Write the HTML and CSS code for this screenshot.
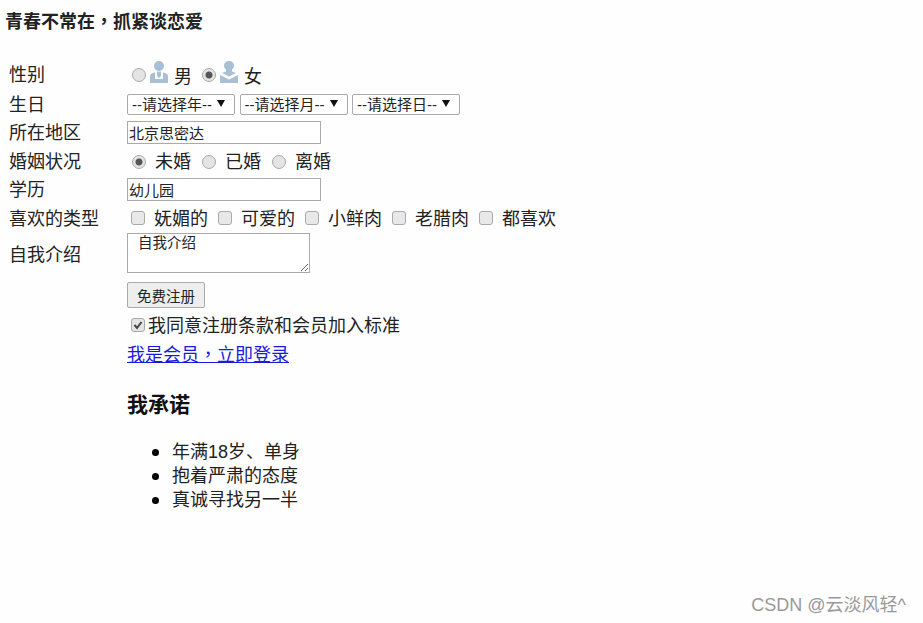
FILE: index.html
```html
<!DOCTYPE html>
<html lang="zh">
  <head>
    <meta charset="utf-8" />
    <title>青春不常在，抓紧谈恋爱</title>
    <link rel="stylesheet" href="styles.css">
  </head>
  <body>
    <h4 class="title">青春不常在<span class="comma" lang="zh-TW">，</span>抓紧谈恋爱</h4>
    <table class="regform">
      <tr class="sex-row">
        <td class="label">性别</td>
        <td>
          <div class="sex-line">
            <input type="radio" name="sex" class="radio">
            <svg class="person" viewBox="0 0 18 22"><circle cx="9" cy="5" r="5"/><path d="M7 10.500h4v4.500l-2 2-2-2zM0 15c0-2 2-3 5-3.500V18h8v-6.500c3 .500 5 1.500 5 3.500v7H0z"/></svg>
            <span class="sex-text">男</span>
            <input type="radio" name="sex" class="radio" checked>
            <svg class="person" viewBox="0 0 18 22"><path d="M9 0c3 0 5 2 5 4.500 0 2-1 3-2 4v2l4 1.500-7 3.500-7-3.500 4-1.500v-2c-1-1-2-2-2-4C4 2 6 0 9 0z"/><path d="M0 14l9 4.500 9-4.500v8H0z"/></svg>
            <span class="sex-text">女</span>
          </div>
        </td>
      </tr>
      <tr>
        <td class="label">生日</td>
        <td>
          <div class="date-line">
            <select><option>--请选择年--</option></select>
            <select><option>--请选择月--</option></select>
            <select><option>--请选择日--</option></select>
          </div>
        </td>
      </tr>
      <tr>
        <td class="label">所在地区</td>
        <td><input type="text" class="field" value="北京思密达"></td>
      </tr>
      <tr>
        <td class="label">婚姻状况</td>
        <td>
          <input type="radio" name="marry" class="radio" checked><span class="gap">未婚</span>
          <input type="radio" name="marry" class="radio"><span class="gap">已婚</span>
          <input type="radio" name="marry" class="radio"><span class="gap">离婚</span>
        </td>
      </tr>
      <tr>
        <td class="label">学历</td>
        <td><input type="text" class="field" value="幼儿园"></td>
      </tr>
      <tr>
        <td class="label">喜欢的类型</td>
        <td>
          <input type="checkbox" class="check"><span class="gap">妩媚的</span>
          <input type="checkbox" class="check"><span class="gap">可爱的</span>
          <input type="checkbox" class="check"><span class="gap">小鲜肉</span>
          <input type="checkbox" class="check"><span class="gap">老腊肉</span>
          <input type="checkbox" class="check"><span class="gap">都喜欢</span>
        </td>
      </tr>
      <tr>
        <td class="label">自我介绍</td>
        <td><textarea class="intro">  自我介绍</textarea></td>
      </tr>
      <tr>
        <td></td>
        <td class="btn-cell"><button type="button" class="submit">免费注册</button></td>
      </tr>
      <tr>
        <td></td>
        <td class="agree-cell"><input type="checkbox" class="check agree" checked><span>我同意注册条款和会员加入标准</span></td>
      </tr>
      <tr>
        <td></td>
        <td><a href="#" class="login">我是会员<span class="comma" lang="zh-TW">，</span>立即登录</a></td>
      </tr>
      <tr>
        <td></td>
        <td>
          <h3 class="promise">我承诺</h3>
          <ul class="promise-list">
            <li>年满18岁、单身</li>
            <li>抱着严肃的态度</li>
            <li>真诚寻找另一半</li>
          </ul>
        </td>
      </tr>
    </table>
    <div class="watermark">CSDN @云淡风轻^</div>
  </body>
</html>
```

FILE: styles.css
```css
body {
  margin: 0;
  padding: 11px 5px 0;
  background-color: #fefefe;
  color: #222;
  font-family: "Liberation Sans", "Noto Sans CJK SC", sans-serif;
  font-size: 18px;
  line-height: 22px;
}
.title {
  margin: 0 0 26.600px;
  font-size: 18px;
  font-weight: bold;
}
.comma {
  font-family: "Noto Sans CJK TC", sans-serif;
  line-height: 0;
}
.regform {
  border-collapse: collapse;
  margin-left: 4px;
}
.regform td {
  padding: 0;
  height: 28.500px;
}
.regform .sex-row td {
  height: 31px;
}
.regform td.label {
  width: 118px;
}
.sex-line {
  display: flex;
  align-items: center;
}
.sex-line .radio {
  margin: 0 0 0 5px;
}
.sex-line .radio + .person {
  margin-left: 4px;
}
.sex-text {
  margin: 3px 5px 0 6px;
}
.radio {
  appearance: none;
  width: 14px;
  height: 14px;
  margin: 0 1px 0 5px;
  vertical-align: -1px;
  border: 1px solid #aaa;
  border-radius: 50%;
  background-color: #e4e4e4;
}
.radio:checked {
  background: radial-gradient(circle, #555 0 3px, #e4e4e4 4px);
}
.person {
  width: 18px;
  height: 22px;
  margin-top: -3px;
  margin-bottom: 3px;
  fill: #a9bfd4;
}
.gap {
  margin-left: 8px;
  margin-right: 1px;
}
.date-line {
  display: flex;
  gap: 4.500px;
  margin-bottom: 1px;
}
select {
  appearance: none;
  box-sizing: border-box;
  width: 108px;
  height: 21px;
  padding: 0 0 0 4px;
  border: 1px solid #aaa;
  border-radius: 2px;
  background: #fff url("data:image/svg+xml,%3Csvg xmlns='http://www.w3.org/2000/svg' viewBox='0 0 8 7'%3E%3Cpath d='M0 0h8L4 7z' fill='%23111'/%3E%3C/svg%3E") right 9px top 5px / 8px 7px no-repeat;
  font-family: inherit;
  font-size: 15px;
  color: #222;
}
.field {
  box-sizing: border-box;
  display: block;
  width: 194px;
  height: 23px;
  margin-bottom: 2px;
  padding: 0 1px;
  border: 1px solid #aaa;
  background-color: #fff;
  font-family: inherit;
  font-size: 15px;
  color: #222;
}
.check {
  appearance: none;
  width: 14px;
  height: 14px;
  margin: 0 1px 0 4px;
  vertical-align: 0;
  border: 1px solid #aaa;
  border-radius: 3px;
  background-color: #e8e8e8;
}
.check:checked {
  background: #e4e4e4 url("data:image/svg+xml,%3Csvg xmlns='http://www.w3.org/2000/svg' viewBox='0 0 12 12'%3E%3Cpath d='M2.500 6l2.500 3 4.500-6' fill='none' stroke='%23444' stroke-width='2'/%3E%3C/svg%3E") center/100% no-repeat;
}
.agree {
  margin-left: 4px;
  margin-right: 3px;
}
.intro {
  box-sizing: border-box;
  display: block;
  width: 183px;
  height: 40px;
  margin: 0 0 4px;
  padding: 1px 2px;
  border: 1px solid #aaa;
  background-color: #fff;
  font-family: inherit;
  font-size: 14.500px;
  line-height: 16px;
  color: #222;
}
.regform td.btn-cell {
  padding-top: 2px;
}
.submit {
  box-sizing: border-box;
  display: block;
  width: 78px;
  height: 26px;
  margin: 3px 0 4px;
  padding: 0;
  border: 1px solid #aaa;
  border-radius: 2px;
  background-color: #eee;
  font-family: inherit;
  font-size: 14.500px;
  color: #222;
}
.regform td.agree-cell {
  height: 24px;
}
.login {
  color: #1a1add;
}
.promise {
  margin: 21.500px 0 21px;
  font-size: 21px;
  line-height: 28px;
  color: #111;
}
.promise-list {
  margin: 0;
  padding-left: 45px;
  line-height: 24px;
  list-style: none;
}
.promise-list li {
  position: relative;
}
.promise-list li::before {
  content: "";
  position: absolute;
  left: -20px;
  top: 9px;
  width: 7px;
  height: 7px;
  border-radius: 50%;
  background-color: #000;
}
.watermark {
  position: absolute;
  right: 17px;
  top: 594px;
  color: #999;
  font-size: 18px;
  line-height: 22px;
}
```
